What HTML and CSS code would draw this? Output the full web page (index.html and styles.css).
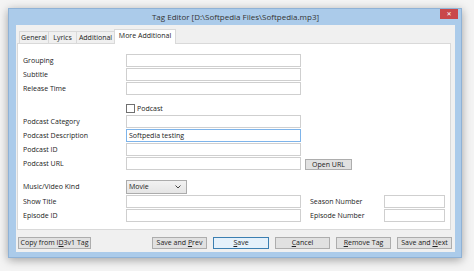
FILE: index.html
```html
<!DOCTYPE html>
<html>
<head>
<meta charset="utf-8">
<link rel="stylesheet" href="styles.css">
</head>
<body>
<div class="window">
  <div class="titlebar">
    <span></span>
    <span class="title">Tag Editor [D:\Softpedia Files\Softpedia.mp3]</span>
    <span class="close">&#x2715;</span>
  </div>
  <div class="client">
    <div class="tabs">
      <span class="tab t1">General</span>
      <span class="tab t2">Lyrics</span>
      <span class="tab t3">Additional</span>
      <span class="tab t4 active">More Additional</span>
    </div>
    <div class="panel">
      <div class="row"><span class="label">Grouping</span><span class="input"></span></div>
      <div class="row"><span class="label">Subtitle</span><span class="input"></span></div>
      <div class="row"><span class="label">Release Time</span><span class="input"></span></div>
      <div class="row gap-a"><span class="label"></span><span class="check"><span class="box"></span>Podcast</span></div>
      <div class="row"><span class="label">Podcast Category</span><span class="input"></span></div>
      <div class="row"><span class="label">Podcast Description</span><span class="input focus">Softpedia testing</span></div>
      <div class="row"><span class="label">Podcast ID</span><span class="input"></span></div>
      <div class="row"><span class="label">Podcast URL</span><span class="input"></span><span class="btn small">Open URL</span></div>
      <div class="row gap-b"><span class="label">Music/Video Kind</span><span class="select">Movie<svg class="chev" width="6" height="4" viewBox="0 0 6 4"><path d="M0.5 0.5 L3 3 L5.5 0.5" fill="none" stroke="#444" stroke-width="1"/></svg></span></div>
      <div class="row gap-c"><span class="label">Show Title</span><span class="input"></span><span class="side">Season Number</span><span class="input"></span></div>
      <div class="row"><span class="label">Episode ID</span><span class="input"></span><span class="side">Episode Number</span><span class="input"></span></div>
    </div>
    <div class="buttons">
      <span class="btn wide">Copy from I<u>D</u>3v1 Tag</span>
      <div class="right">
        <span class="btn">Save and <u>P</u>rev</span>
        <span class="btn default"><u>S</u>ave</span>
        <span class="btn"><u>C</u>ancel</span>
        <span class="btn"><u>R</u>emove Tag</span>
        <span class="btn">Save and <u>N</u>ext</span>
      </div>
    </div>
  </div>
</div>
</body>
</html>
```

FILE: styles.css
```css
html, body {
  margin: 0;
  padding: 0;
}
body {
  width: 474px;
  height: 271px;
  background: #f4f4f4;
  font-family: "Open Sans", "Noto Sans", sans-serif;
  font-size: 7px;
  color: #222;
  overflow: hidden;
}
.window {
  margin: 8px 0 0 8px;
  width: 454px;
  height: 250px;
  box-sizing: border-box;
  background: #abcbea;
  border: 1px solid #8fb2d6;
  box-shadow: 0 2px 9px rgba(0, 0, 0, 0.35);
  display: flex;
  flex-direction: column;
  padding: 0 6px 5px 7px;
}
.titlebar {
  height: 16px;
  display: grid;
  grid-template-columns: 1fr auto 1fr;
  align-items: center;
}
.title {
  font-size: 8px;
  color: #333;
  margin-top: -2px;
  white-space: nowrap;
}
.close {
  justify-self: end;
  align-self: start;
  width: 18px;
  height: 10px;
  margin-right: -3px;
  background: #c9474b;
  color: #fff;
  font-size: 6px;
  line-height: 10px;
  text-align: center;
  font-family: "DejaVu Sans", sans-serif;
  font-weight: bold;
}
.client {
  flex: 1;
  background: #f0f0f0;
  padding: 4px 4px 3px 1px;
  display: flex;
  flex-direction: column;
}
.tabs {
  display: flex;
  align-items: flex-end;
  height: 14px;
  padding-left: 2px;
}
.tab {
  height: 12px;
  box-sizing: border-box;
  border: 1px solid #d9d9d9;
  border-bottom: none;
  margin-right: -1px;
  background: #f0f0f0;
  text-align: center;
  line-height: 11px;
  color: #222;
  white-space: nowrap;
}
.t1 { width: 30px; }
.t2 { width: 29px; }
.t3 { width: 39px; }
.t4 { width: 62px; }
.tab.active {
  background: #fff;
  line-height: 12px;
  position: relative;
  margin-bottom: -1px;
  height: 15px;
}
.panel {
  height: 187px;
  box-sizing: border-box;
  background: #fff;
  border: 1px solid #d9d9d9;
  padding: 10px 0 0 5px;
  display: flex;
  flex-direction: column;
}
.row {
  height: 14px;
  display: grid;
  grid-template-columns: 103px 175px 83px 61px;
  align-items: start;
}
.gap-a { margin-top: 5px; }
.gap-b { margin-top: 9px; }
.gap-c { margin-top: 1px; }
.label {
  line-height: 13px;
  color: #222;
}
.input {
  height: 13px;
  box-sizing: border-box;
  border: 1px solid #cfcfcf;
  background: #fff;
  line-height: 11px;
  padding-left: 2px;
}
.input.focus {
  border-color: #7eb4ea;
}
.check {
  display: flex;
  align-items: center;
  height: 13px;
  margin-top: 1px;
}
.box {
  width: 7px;
  height: 7px;
  border: 1px solid #707070;
  background: #fff;
  margin-right: 2px;
}
.side {
  line-height: 13px;
  padding-left: 9px;
}
.btn {
  height: 12px;
  box-sizing: border-box;
  border: 1px solid #adadad;
  background: #e1e1e1;
  text-align: center;
  line-height: 10px;
  width: 55px;
  color: #222;
  white-space: nowrap;
}
.btn.small {
  width: 47px;
  height: 11px;
  margin: 2px 0 0 4px;
  line-height: 9px;
}
.btn.wide {
  width: 73px;
}
.btn.default {
  border-color: #3c7fb1;
  background: #e5f1fb;
  width: 56px;
}
.btn u {
  text-decoration: underline;
  text-underline-offset: 1px;
}
.select {
  width: 61px;
  height: 14px;
  box-sizing: border-box;
  border: 1px solid #acacac;
  background: linear-gradient(#f2f2f2, #e5e5e5);
  line-height: 12px;
  padding-left: 2px;
  display: flex;
  align-items: center;
  justify-content: space-between;
  padding-right: 5px;
}
.buttons {
  margin-top: 7px;
  display: flex;
  justify-content: space-between;
  padding-left: 1px;
  margin-right: -1px;
}
.buttons .right {
  display: flex;
  gap: 6px;
}
```
